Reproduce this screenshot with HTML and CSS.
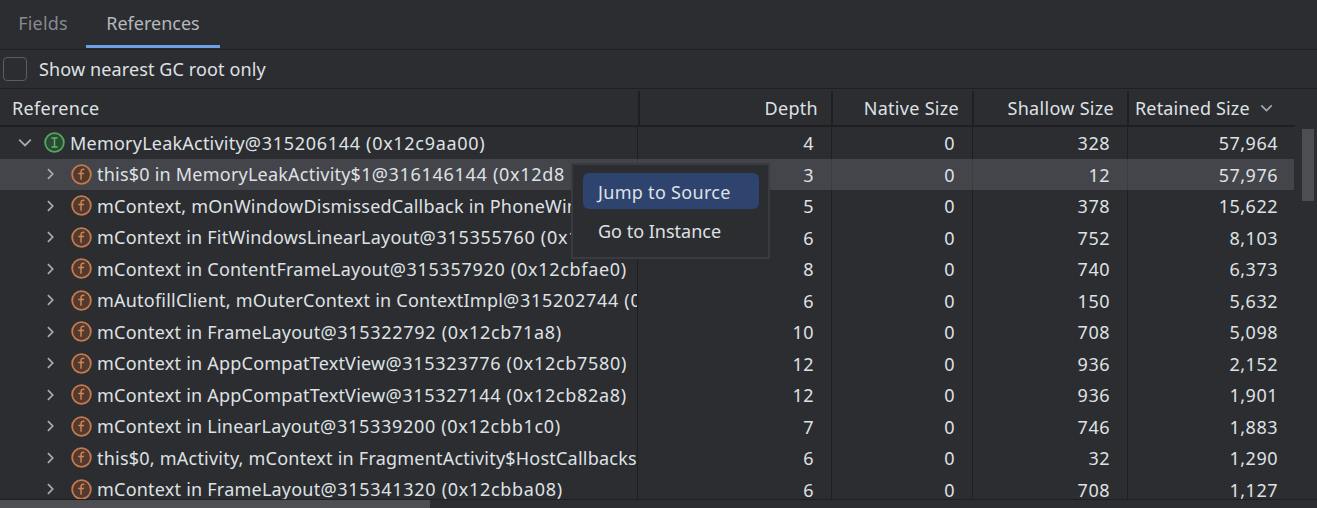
FILE: index.html
```html
<!DOCTYPE html>
<html lang="en">
<head>
<meta charset="utf-8">
<title>References</title>
<link rel="stylesheet" href="styles.css">
</head>
<body>
<svg class="defs" width="0" height="0">
  <symbol id="right" viewBox="0 0 12 12"><path d="M3.2 .8 L8.4 6 L3.2 11.2" fill="none" stroke="#a8abb1" stroke-width="1.9"/></symbol>
  <symbol id="down" viewBox="0 0 14 10"><path d="M1.2 1.6 L7 7.4 L12.8 1.6" fill="none" stroke="#a8abb1" stroke-width="1.8"/></symbol>
  <symbol id="field" viewBox="0 0 22 22"><circle cx="11" cy="11" r="9.8" fill="#54392d" stroke="#c47a50" stroke-width="1.9"/><path d="M14 5.8 C11.8 5 10.5 6 10.5 8 V16.5 M7.6 10 H13.6" fill="none" stroke="#d0875c" stroke-width="1.5"/></symbol>
  <symbol id="iface" viewBox="0 0 22 22"><circle cx="11" cy="11" r="9.8" fill="#2b4a33" stroke="#57a65f" stroke-width="1.9"/><path d="M7.8 6.2 H14.2 M7.8 15.8 H14.2 M11 6.2 V15.8" fill="none" stroke="#62b56b" stroke-width="1.5"/></symbol>
</svg>
<div class="tabs">
  <div class="tab">Fields</div>
  <div class="tab active">References</div>
</div>
<div class="filter">
  <span class="checkbox"></span>
  <span class="filter-label">Show nearest GC root only</span>
</div>
<div class="row header">
  <div class="name">Reference</div>
  <div class="num">Depth</div>
  <div class="num">Native Size</div>
  <div class="num">Shallow Size</div>
  <div class="num sorted">Retained Size<svg class="sort"><use href="#down"/></svg></div>
</div>
<div class="body">
  <div class="rows">
    <div class="row root"><div class="name"><svg class="tw down"><use href="#down"/></svg><svg class="ic"><use href="#iface"/></svg><span>MemoryLeakActivity<span class="addr">@315206144 (0x12c9aa00)</span></span></div><div class="num">4</div><div class="num">0</div><div class="num">328</div><div class="num">57,964</div></div>
    <div class="row selected"><div class="name"><svg class="tw"><use href="#right"/></svg><svg class="ic"><use href="#field"/></svg><span>this$0 in MemoryLeakActivity$1<span class="addr">@316146144 (0x12d8</span></span></div><div class="num">3</div><div class="num">0</div><div class="num">12</div><div class="num">57,976</div></div>
    <div class="row"><div class="name"><svg class="tw"><use href="#right"/></svg><svg class="ic"><use href="#field"/></svg><span>mContext, mOnWindowDismissedCallback in PhoneWin</span></div><div class="num">5</div><div class="num">0</div><div class="num">378</div><div class="num">15,622</div></div>
    <div class="row"><div class="name"><svg class="tw"><use href="#right"/></svg><svg class="ic"><use href="#field"/></svg><span>mContext in FitWindowsLinearLayout<span class="addr">@315355760 (0x1</span></span></div><div class="num">6</div><div class="num">0</div><div class="num">752</div><div class="num">8,103</div></div>
    <div class="row"><div class="name"><svg class="tw"><use href="#right"/></svg><svg class="ic"><use href="#field"/></svg><span>mContext in ContentFrameLayout<span class="addr">@315357920 (0x12cbfae0)</span></span></div><div class="num">8</div><div class="num">0</div><div class="num">740</div><div class="num">6,373</div></div>
    <div class="row"><div class="name"><svg class="tw"><use href="#right"/></svg><svg class="ic"><use href="#field"/></svg><span>mAutofillClient, mOuterContext in ContextImpl<span class="addr">@315202744 (0</span></span></div><div class="num">6</div><div class="num">0</div><div class="num">150</div><div class="num">5,632</div></div>
    <div class="row"><div class="name"><svg class="tw"><use href="#right"/></svg><svg class="ic"><use href="#field"/></svg><span>mContext in FrameLayout<span class="addr">@315322792 (0x12cb71a8)</span></span></div><div class="num">10</div><div class="num">0</div><div class="num">708</div><div class="num">5,098</div></div>
    <div class="row"><div class="name"><svg class="tw"><use href="#right"/></svg><svg class="ic"><use href="#field"/></svg><span>mContext in AppCompatTextView<span class="addr">@315323776 (0x12cb7580)</span></span></div><div class="num">12</div><div class="num">0</div><div class="num">936</div><div class="num">2,152</div></div>
    <div class="row"><div class="name"><svg class="tw"><use href="#right"/></svg><svg class="ic"><use href="#field"/></svg><span>mContext in AppCompatTextView<span class="addr">@315327144 (0x12cb82a8)</span></span></div><div class="num">12</div><div class="num">0</div><div class="num">936</div><div class="num">1,901</div></div>
    <div class="row"><div class="name"><svg class="tw"><use href="#right"/></svg><svg class="ic"><use href="#field"/></svg><span>mContext in LinearLayout<span class="addr">@315339200 (0x12cbb1c0)</span></span></div><div class="num">7</div><div class="num">0</div><div class="num">746</div><div class="num">1,883</div></div>
    <div class="row"><div class="name"><svg class="tw"><use href="#right"/></svg><svg class="ic"><use href="#field"/></svg><span>this$0, mActivity, mContext in FragmentActivity$HostCallbacks</span></div><div class="num">6</div><div class="num">0</div><div class="num">32</div><div class="num">1,290</div></div>
    <div class="row"><div class="name"><svg class="tw"><use href="#right"/></svg><svg class="ic"><use href="#field"/></svg><span>mContext in FrameLayout<span class="addr">@315341320 (0x12cbba08)</span></span></div><div class="num">6</div><div class="num">0</div><div class="num">708</div><div class="num">1,127</div></div>
  </div>
  <div class="vscroll"><div class="vthumb"></div></div>
</div>
<div class="hscroll"><div class="hthumb"></div></div>
<div class="menu">
  <div class="item on"><u>J</u>ump to Source</div>
  <div class="item">Go to Instance</div>
</div>
</body>
</html>
```
FILE: styles.css
```css
* { box-sizing: border-box; }
html, body { margin: 0; height: 508px; overflow: hidden; }
body {
  background: #2b2d30;
  color: #dfe1e5;
  font-family: "Noto Sans", "Open Sans", sans-serif;
  font-size: 18px;
  display: flex;
  flex-direction: column;
  position: relative;
}
.defs { position: absolute; }
.tabs {
  display: flex;
  height: 50px;
  border-bottom: 1px solid #1e1f22;
}
.tab {
  width: 86px;
  text-align: center;
  line-height: 47px;
  color: #868a91;
  height: 48px;
  letter-spacing: .2px;
}
.tab.active {
  width: 134px;
  color: #b4b8bf;
  border-bottom: 3px solid #6f9fe8;
  letter-spacing: 0;
}
.filter {
  height: 39px;
  display: flex;
  align-items: center;
  gap: 12px;
  padding-left: 3px;
  border-bottom: 1px solid #1e1f22;
}
.filter-label { letter-spacing: .12px; }
.checkbox {
  width: 24px;
  height: 24px;
  border: 1.5px solid #5a5d63;
  border-radius: 4px;
  background: #2b2d30;
}
.row {
  display: grid;
  grid-template-columns: 638px 194px 141px 155px 167px;
  width: 1295px;
  height: 31.5px;
  align-items: center;
  line-height: 32px;
  white-space: nowrap;
}
.row > div { height: 100%; border-right: 1px solid #1e1f22; }
.row > div:last-child { border-right: 0; }
.rows .name { padding-bottom: 1px; }
.num { text-align: right; padding-right: 17px; letter-spacing: .5px; }
.row.header {
  grid-template-columns: 640px 193px 141px 155px 166px;
  height: 38px;
  border-bottom: 2px solid #1e1f22;
}
.row.header > div {
  height: 34px;
  line-height: 34px;
  border-right: 2px solid #1e1f22;
  margin-top: 2px;
  letter-spacing: .3px;
}
.row.header > div:last-child { border-right: 0; }
.header .name { padding-left: 12px; }
.row.header .num { padding-right: 13px; }
.row.header .sorted {
  text-align: left;
  padding: 0 0 0 6px;
  display: flex;
  align-items: center;
  gap: 10px;
  letter-spacing: .15px;
}
.sort { width: 13px; height: 9px; }
.body { flex: 1; display: flex; min-height: 0; position: relative; }
.rows { width: 1295px; overflow: hidden; }
.name { display: flex; align-items: center; overflow: hidden; padding-left: 45px; }
.name > span { margin-left: 5px; letter-spacing: .22px; }
.addr { letter-spacing: .7px; }
.tw { width: 11px; height: 12px; flex: none; margin-right: 15px; }
.ic { width: 21px; height: 21px; flex: none; }
.root .name { padding-left: 18px; }
.tw.down { width: 14px; height: 10px; margin-right: 12px; }
.selected { background: #43454a; width: 1294px; }
.selected > div { border-right-color: #3a3c40; }
.vscroll { flex: 1; padding: 2px 3px 0 7px; }
.vthumb { width: 12px; height: 72px; background: #4c4e52; }
.hscroll {
  height: 9px;
  flex: none;
  border-top: 1px solid #1e1f22;
  background: #2b2d30;
}
.hthumb { width: 430px; height: 8px; background: #4c4e52; }
.menu {
  position: absolute;
  left: 571px;
  top: 163px;
  width: 199px;
  height: 96px;
  background: #2b2d30;
  border: 2px solid #393b40;
  padding: 8px 10px;
}
.item {
  height: 36px;
  line-height: 36px;
  padding-left: 15px;
  border-radius: 6px;
  color: #dfe1e5;
}
.item + .item { margin-top: 4px; }
.item.on { background: #2e436e; letter-spacing: .3px; line-height: 38px; width: 176px; }
```
